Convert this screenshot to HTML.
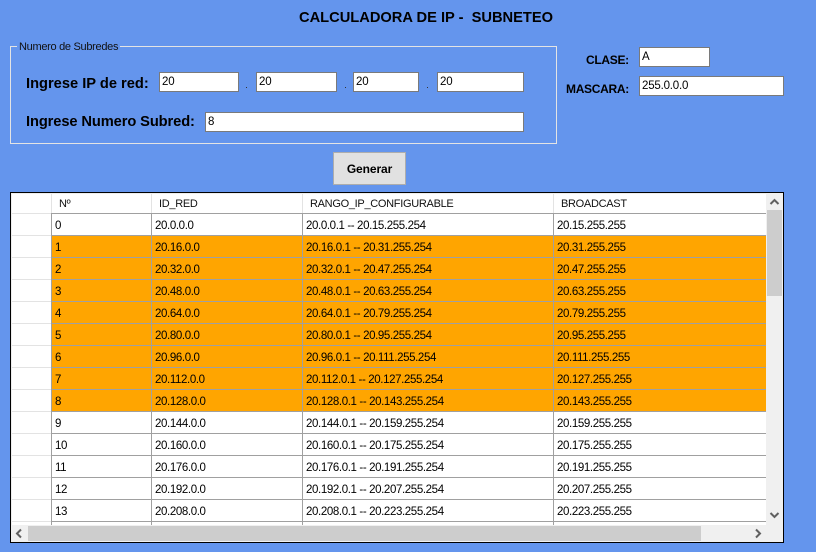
<!DOCTYPE html>
<html><head><meta charset="utf-8"><style>
html,body{margin:0;padding:0}
body{width:816px;height:552px;position:relative;overflow:hidden;background:#6495ED;font-family:"Liberation Sans",sans-serif;color:#000}
div{position:absolute;box-sizing:border-box;white-space:pre}
.i{background:#fff;border:1px solid #7a7a7a;height:20px;font-size:11.5px;line-height:18px;padding-left:2px;letter-spacing:-.2px}
.l{font-weight:bold;font-size:14.67px;line-height:17px}
.m{font-weight:bold;font-size:12px;line-height:14px;letter-spacing:-.3px}
.t{font-size:11.5px;line-height:14px;letter-spacing:-.38px}
.h{font-size:11px;line-height:14px;top:197px;color:#111;letter-spacing:-.3px}
.o{background:#FFA500;left:52px;width:714px;height:21px}
.hl{left:52px;width:714px;height:1px;background:#a0a0a0}
.rl{left:12px;width:39px;height:1px;background:#e3e3e3}
.vl{top:213px;width:1px;height:312px;background:#a0a0a0}
.hv{top:194px;width:1px;height:19px;background:#e3e3e3}
</style></head><body>
<div class="l" style="left:299px;top:10px">CALCULADORA DE IP -  SUBNETEO</div>

<div style="left:10px;top:46px;width:547px;height:98px;border:1px solid #e4e4e4"></div>
<div style="left:17px;top:40px;padding:0 2px;background:#6495ED;font-size:11px;line-height:14px;letter-spacing:-.3px;color:#111">Numero de Subredes</div>
<div class="l" style="left:26px;top:76px">Ingrese IP de red:</div>
<div class="l" style="left:26px;top:114px;letter-spacing:-.1px">Ingrese Numero Subred:</div>
<div class="i" style="left:159px;top:72px;width:80px">20</div>
<div class="i" style="left:256px;top:72px;width:81px">20</div>
<div class="i" style="left:353px;top:72px;width:66px">20</div>
<div class="i" style="left:437px;top:72px;width:87px">20</div>
<div class="i" style="left:205px;top:112px;width:319px">8</div>
<div style="left:246px;top:87px;width:1px;height:1px;background:#333"></div>
<div style="left:345px;top:87px;width:1px;height:1px;background:#333"></div>
<div style="left:427px;top:87px;width:1px;height:1px;background:#333"></div>

<div class="m" style="left:586px;top:53px">CLASE:</div>
<div class="m" style="left:566px;top:82px">MASCARA:</div>
<div class="i" style="left:639px;top:47px;width:71px">A</div>
<div class="i" style="left:639px;top:76px;width:145px">255.0.0.0</div>

<div style="left:333px;top:152px;width:73px;height:33px;background:#e1e1e1;border:1px solid #adadad;font-weight:bold;font-size:12px;line-height:33px;text-align:center;letter-spacing:-.1px">Generar</div>

<div style="left:10px;top:192px;width:774px;height:351px;background:#fff;border:1px solid #000"></div>
<div style="left:11px;top:193px;width:772px;height:1px;background:#eee"></div>
<div style="left:11px;top:193px;width:1px;height:332px;background:#eee"></div>

<div class="o" style="top:236px;height:175px"></div>

<div class="hv" style="left:51px"></div><div class="hv" style="left:151px"></div><div class="hv" style="left:302px"></div><div class="hv" style="left:553px"></div>
<div class="h" style="left:59px">Nº</div>
<div class="h" style="left:159px">ID_RED</div>
<div class="h" style="left:310px">RANGO_IP_CONFIGURABLE</div>
<div class="h" style="left:561px">BROADCAST</div>

<div class="rl" style="top:213px"></div><div class="rl" style="top:235px"></div><div class="rl" style="top:257px"></div><div class="rl" style="top:279px"></div><div class="rl" style="top:301px"></div><div class="rl" style="top:323px"></div><div class="rl" style="top:345px"></div><div class="rl" style="top:367px"></div><div class="rl" style="top:389px"></div><div class="rl" style="top:411px"></div><div class="rl" style="top:433px"></div><div class="rl" style="top:455px"></div><div class="rl" style="top:477px"></div><div class="rl" style="top:499px"></div><div class="rl" style="top:521px"></div>

<div class="hl" style="top:213px"></div><div class="hl" style="top:235px"></div><div class="hl" style="top:257px"></div><div class="hl" style="top:279px"></div><div class="hl" style="top:301px"></div><div class="hl" style="top:323px"></div><div class="hl" style="top:345px"></div><div class="hl" style="top:367px"></div><div class="hl" style="top:389px"></div><div class="hl" style="top:411px"></div><div class="hl" style="top:433px"></div><div class="hl" style="top:455px"></div><div class="hl" style="top:477px"></div><div class="hl" style="top:499px"></div><div class="hl" style="top:521px"></div>
<div class="vl" style="left:51px"></div><div class="vl" style="left:151px"></div><div class="vl" style="left:302px"></div><div class="vl" style="left:553px"></div>

<div class="t" style="left:55px;top:219px">0</div><div class="t" style="left:155px;top:219px">20.0.0.0</div><div class="t" style="left:306px;top:219px">20.0.0.1 -- 20.15.255.254</div><div class="t" style="left:557px;top:219px">20.15.255.255</div>
<div class="t" style="left:55px;top:241px">1</div><div class="t" style="left:155px;top:241px">20.16.0.0</div><div class="t" style="left:306px;top:241px">20.16.0.1 -- 20.31.255.254</div><div class="t" style="left:557px;top:241px">20.31.255.255</div>
<div class="t" style="left:55px;top:263px">2</div><div class="t" style="left:155px;top:263px">20.32.0.0</div><div class="t" style="left:306px;top:263px">20.32.0.1 -- 20.47.255.254</div><div class="t" style="left:557px;top:263px">20.47.255.255</div>
<div class="t" style="left:55px;top:285px">3</div><div class="t" style="left:155px;top:285px">20.48.0.0</div><div class="t" style="left:306px;top:285px">20.48.0.1 -- 20.63.255.254</div><div class="t" style="left:557px;top:285px">20.63.255.255</div>
<div class="t" style="left:55px;top:307px">4</div><div class="t" style="left:155px;top:307px">20.64.0.0</div><div class="t" style="left:306px;top:307px">20.64.0.1 -- 20.79.255.254</div><div class="t" style="left:557px;top:307px">20.79.255.255</div>
<div class="t" style="left:55px;top:329px">5</div><div class="t" style="left:155px;top:329px">20.80.0.0</div><div class="t" style="left:306px;top:329px">20.80.0.1 -- 20.95.255.254</div><div class="t" style="left:557px;top:329px">20.95.255.255</div>
<div class="t" style="left:55px;top:351px">6</div><div class="t" style="left:155px;top:351px">20.96.0.0</div><div class="t" style="left:306px;top:351px">20.96.0.1 -- 20.111.255.254</div><div class="t" style="left:557px;top:351px">20.111.255.255</div>
<div class="t" style="left:55px;top:373px">7</div><div class="t" style="left:155px;top:373px">20.112.0.0</div><div class="t" style="left:306px;top:373px">20.112.0.1 -- 20.127.255.254</div><div class="t" style="left:557px;top:373px">20.127.255.255</div>
<div class="t" style="left:55px;top:395px">8</div><div class="t" style="left:155px;top:395px">20.128.0.0</div><div class="t" style="left:306px;top:395px">20.128.0.1 -- 20.143.255.254</div><div class="t" style="left:557px;top:395px">20.143.255.255</div>
<div class="t" style="left:55px;top:417px">9</div><div class="t" style="left:155px;top:417px">20.144.0.0</div><div class="t" style="left:306px;top:417px">20.144.0.1 -- 20.159.255.254</div><div class="t" style="left:557px;top:417px">20.159.255.255</div>
<div class="t" style="left:55px;top:439px">10</div><div class="t" style="left:155px;top:439px">20.160.0.0</div><div class="t" style="left:306px;top:439px">20.160.0.1 -- 20.175.255.254</div><div class="t" style="left:557px;top:439px">20.175.255.255</div>
<div class="t" style="left:55px;top:461px">11</div><div class="t" style="left:155px;top:461px">20.176.0.0</div><div class="t" style="left:306px;top:461px">20.176.0.1 -- 20.191.255.254</div><div class="t" style="left:557px;top:461px">20.191.255.255</div>
<div class="t" style="left:55px;top:483px">12</div><div class="t" style="left:155px;top:483px">20.192.0.0</div><div class="t" style="left:306px;top:483px">20.192.0.1 -- 20.207.255.254</div><div class="t" style="left:557px;top:483px">20.207.255.255</div>
<div class="t" style="left:55px;top:505px">13</div><div class="t" style="left:155px;top:505px">20.208.0.0</div><div class="t" style="left:306px;top:505px">20.208.0.1 -- 20.223.255.254</div><div class="t" style="left:557px;top:505px">20.223.255.255</div>

<div style="left:766px;top:193px;width:17px;height:349px;background:#f0f0f0"></div>
<div style="left:767px;top:210px;width:15px;height:86px;background:#cdcdcd"></div>
<div style="left:11px;top:525px;width:772px;height:17px;background:#f0f0f0"></div>
<div style="left:28px;top:526px;width:673px;height:15px;background:#cdcdcd"></div>
<svg style="position:absolute;left:766px;top:193px" width="17" height="349" viewBox="0 0 17 349"><path d="M4.5 11 L8.5 7 L12.5 11" fill="none" stroke="#606060" stroke-width="2"/><path d="M4.5 320 L8.5 324 L12.5 320" fill="none" stroke="#606060" stroke-width="2"/></svg>
<svg style="position:absolute;left:11px;top:525px" width="772" height="17" viewBox="0 0 772 17"><path d="M10 4.5 L6 8.5 L10 12.5" fill="none" stroke="#606060" stroke-width="2"/><path d="M745 4.5 L749 8.5 L745 12.5" fill="none" stroke="#606060" stroke-width="2"/></svg>
</body></html>
